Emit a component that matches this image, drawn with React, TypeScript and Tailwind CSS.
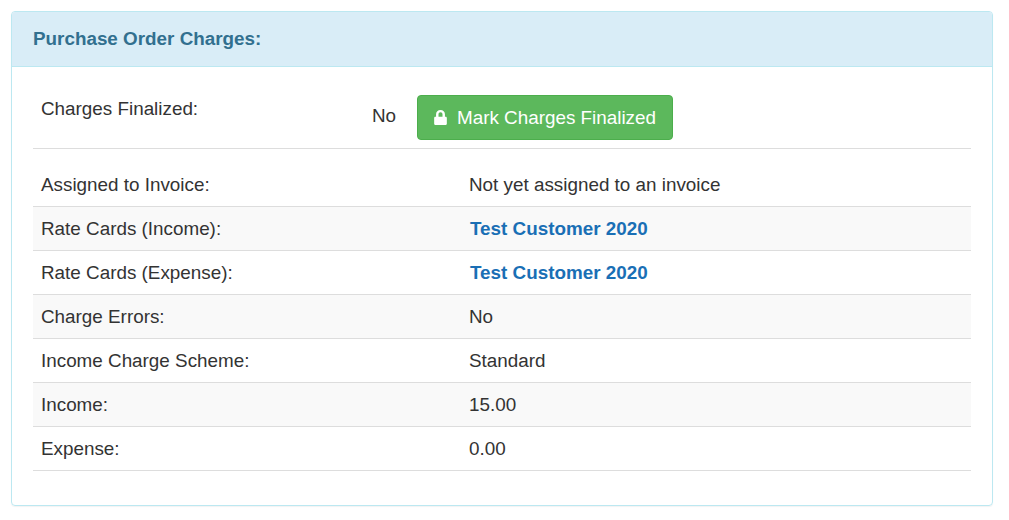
const rows = [
  { label: "Assigned to Invoice:", value: "Not yet assigned to an invoice" },
  { label: "Rate Cards (Income):", value: "Test Customer 2020", link: true, alt: true },
  { label: "Rate Cards (Expense):", value: "Test Customer 2020", link: true },
  { label: "Charge Errors:", value: "No", alt: true },
  { label: "Income Charge Scheme:", value: "Standard" },
  { label: "Income:", value: "15.00", alt: true },
  { label: "Expense:", value: "0.00" },
];

export default function App() {
  return (
    <div className="h-[520px] w-[1009px] bg-white pl-[11px] pt-[11px] font-['Liberation_Sans',Arial,sans-serif] text-[18.85px] leading-[26px] text-[#333]">
      <div className="h-[495px] w-[982px] rounded-[4px] border border-[#bce8f1] shadow-[0_1px_1px_rgba(0,0,0,0.05)]">
        <div className="flex h-[55px] items-center rounded-t-[3px] border-b border-[#bce8f1] bg-[#d9edf7] pl-[21px] font-bold text-[#31708f]">
          Purchase Order Charges:
        </div>
        <div className="px-[21px]">
          <div className="flex h-[82px] border-b border-[#ddd] pl-2">
            <div className="w-[331px] pt-[29px]">Charges Finalized:</div>
            <div className="w-[45px] pt-[36px]">No</div>
            <button className="mt-[28px] flex h-[45px] w-[256px] items-center justify-center gap-[10px] rounded-[4px] border border-[#4cae4c] bg-[#5cb85c] text-white">
              <svg width="13" height="15" viewBox="1.3 1 11.400 13.500" fill="white" aria-hidden="true" className="mb-px">
                <path d="M3 7V4.800C3 2.500 4.700 1 7 1s4 1.500 4 3.800V7h.6c.6 0 1.100.5 1.100 1.100v5.300c0 .6-.5 1.100-1.100 1.100H2.400c-.6 0-1.100-.5-1.100-1.100V8.100C1.300 7.500 1.800 7 2.400 7H3zm2.200 0h3.600V4.800C8.800 3.700 8.100 3 7 3s-1.800.7-1.800 1.800V7z" />
              </svg>
              <span>Mark Charges Finalized</span>
            </button>
          </div>
          <div className="mt-[14px]">
            {rows.map((r) => (
              <div
                key={r.label}
                className={`flex h-[44px] items-center border-b border-[#ddd] pl-2 ${r.alt ? "bg-[#f9f9f9]" : ""}`}
              >
                <div className="w-[428px]">{r.label}</div>
                {r.link ? (
                  <a className="pl-px font-bold text-[#1a6fb5]">{r.value}</a>
                ) : (
                  <div>{r.value}</div>
                )}
              </div>
            ))}
          </div>
        </div>
      </div>
    </div>
  );
}
